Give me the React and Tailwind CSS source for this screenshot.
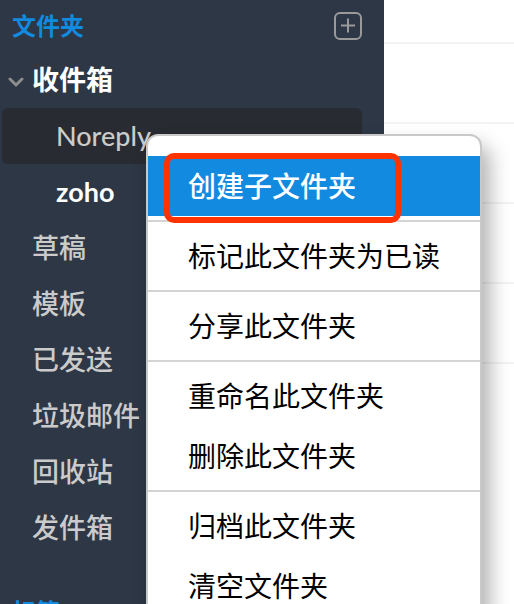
import React, { useState } from 'react';

const carpetas = [
  { id: 'drafts', nombre: '草稿' },
  { id: 'templates', nombre: '模板' },
  { id: 'sent', nombre: '已发送' },
  { id: 'spam', nombre: '垃圾邮件' },
  { id: 'trash', nombre: '回收站' },
  { id: 'outbox', nombre: '发件箱' }
];

const gruposMenu = [
  ['创建子文件夹'],
  ['标记此文件夹为已读'],
  ['分享此文件夹'],
  ['重命名此文件夹', '删除此文件夹'],
  ['归档此文件夹', '清空文件夹']
];

const Sidebar = ({ seleccionada, onSelect }) => (
  <aside className="w-96 shrink-0 bg-[#2d3745] text-[27px] leading-[56px] font-medium text-[#cbcbcb]">
    <div className="flex h-[52px] items-center justify-between pl-3 pr-[22px]">
      <h2 className="text-2xl font-bold text-[#128adf]">文件夹</h2>
      <button type="button" aria-label="新建文件夹" className="text-[#9a9a9a]">
        <svg className="size-7" viewBox="0 0 28 28" fill="none" stroke="currentColor" strokeWidth="2">
          <rect x="1" y="1" width="26" height="26" rx="5" />
          <path d="M7 13.5h14M14 6.5v14" />
        </svg>
      </button>
    </div>

    <nav>
      <button type="button" className="flex h-14 w-full items-center pl-2 font-bold text-white">
        <svg className="mr-2 h-4 w-4" viewBox="0 0 16 16" fill="none" stroke="#8d8d8d" strokeWidth="3" strokeLinecap="round">
          <path d="M2 7l6 6 6-6" />
        </svg>
        收件箱
      </button>

      {/* Subcarpetas */}
      <ul>
        {['Noreply', 'zoho'].map((nombre) => (
          <li key={nombre} className="pl-[2px] pr-[22px]">
            <button
              type="button"
              onClick={() => onSelect(nombre)}
              className={`block h-14 w-full rounded-md pl-[54px] text-left ${
                nombre === seleccionada ? 'bg-[#292b33]' : 'font-bold text-white'
              }`}
            >
              {nombre}
            </button>
          </li>
        ))}
      </ul>

      <ul>
        {carpetas.map((carpeta) => (
          <li key={carpeta.id}>
            <button type="button" className="block h-14 w-full pl-8 text-left">
              {carpeta.nombre}
            </button>
          </li>
        ))}
      </ul>
    </nav>

    <h2 className="mt-[30px] pl-3 text-2xl leading-[52px] font-bold text-[#128adf]">标签</h2>
  </aside>
);

const MenuContextual = () => (
  <div
    role="menu"
    className="absolute top-[134px] left-[146px] w-[336px] rounded-xl border-2 border-[#c9c9c9] bg-white pt-5 text-[28px] leading-[60px] text-black shadow-[8px_12px_20px_rgba(0,0,0,0.3)]"
  >
    {gruposMenu.map((grupo, i) => (
      <div key={grupo[0]} className={i > 0 ? 'mt-1 border-t-2 border-[#d4d4d4] pt-1' : ''}>
        {grupo.map((accion) => (
          <button
            key={accion}
            type="button"
            role="menuitem"
            className={`block h-15 w-full pl-10 text-left ${i === 0 ? 'bg-[#128adf] font-medium text-white' : ''}`}
          >
            {accion}
          </button>
        ))}
      </div>
    ))}
    {/* Marco rojo sobre la primera opción */}
    <div className="pointer-events-none absolute top-[17px] left-4 h-[70px] w-[237px] rounded-[10px] border-6 border-[#ff3300]" />
  </div>
);

const App = () => {
  const [seleccionada, setSeleccionada] = useState('Noreply');

  return (
    <div className="relative flex h-screen overflow-hidden bg-white font-[Lato,'Noto_Sans_CJK_SC',sans-serif]">
      <Sidebar seleccionada={seleccionada} onSelect={setSeleccionada} />

      <main className="min-w-0 flex-1">
        <div className="h-11 border-b-2 border-[#f3f3f3]" />
        {[1, 2, 3, 4].map((fila) => (
          <div key={fila} className="h-20 border-b-2 border-[#f3f3f3]" />
        ))}
      </main>

      <MenuContextual />
    </div>
  );
};

export default App;
